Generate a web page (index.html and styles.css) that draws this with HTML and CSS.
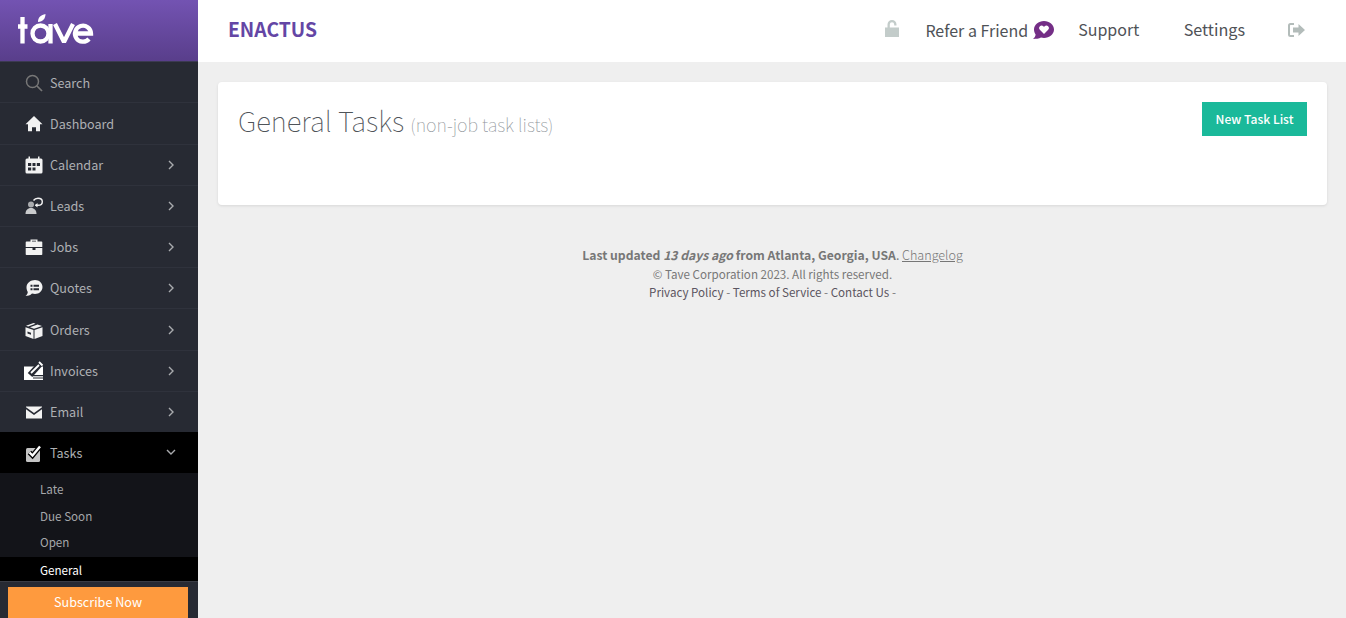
FILE: index.html
```html
<!DOCTYPE html>
<html lang="en">
<head>
<meta charset="utf-8">
<title>General Tasks</title>
<link rel="stylesheet" href="styles.css">
</head>
<body>
<div class="app">
  <aside class="sidebar">
    <div class="brand">
      <svg class="logo" viewBox="0 0 100 62" role="img" aria-label="táve">
        <g fill="none" stroke="#fff" stroke-width="4.300">
          <path d="M22.500 17V43.500M18 26.500H27.500"/>
          <circle cx="40.500" cy="33.500" r="8"/>
          <path d="M50.500 24V43.500"/>
          <path d="M55 24L64 42L73 24" stroke-linejoin="bevel"/>
          <path d="M75 33.500H91A8 8 0 1 0 89 39"/>
        </g>
        <path d="M38 22C38 17 41 15 45.500 14C45.500 18.500 43 21.500 38 22Z" fill="#fff"/>
      </svg>
    </div>
    <nav class="menu">
      <a class="item first-item"><svg class="ic dim" viewBox="0 0 18 18"><circle cx="7.500" cy="7.500" r="6" fill="none" stroke="currentColor" stroke-width="1.500"/><path d="M12 12l5 5" stroke="currentColor" stroke-width="1.700"/></svg><span class="label">Search</span></a>
      <a class="item"><svg class="ic" viewBox="0 0 18 18"><path d="M9 1L17.500 9.300h-2.500v7H11v-4H7v4H3V9.300H.5z" fill="currentColor"/></svg><span class="label">Dashboard</span></a>
      <a class="item"><svg class="ic" viewBox="0 0 18 18"><path d="M.5 4a1.500 1.500 0 0 1 1.500-1.500h1.500V.5H5v2h8v-2h1.500v2H16A1.500 1.500 0 0 1 17.500 4v12a1.500 1.500 0 0 1-1.500 1.500H2A1.500 1.500 0 0 1 .5 16z" fill="currentColor"/><path d="M3 7h3.200v3H3zM7.500 7h3v3h-3zM11.800 7H15v3h-3.200zM3 11.500h3.200v3H3zM7.500 11.500h3v3h-3z" fill="#272a33"/></svg><span class="label">Calendar</span><svg class="chev" viewBox="0 0 6 10"><path d="M1 1l4 4-4 4"/></svg></a>
      <a class="item"><svg class="ic" viewBox="0 0 18 18"><path d="M8.500 3.500C9.500 2 11 1.200 13 1.200c2.500 0 4.300 1.500 4.300 3.500S15.500 8.300 13 8.300h-2.500" fill="none" stroke="#f2f2f2" stroke-width="1.400"/><path d="M12.500 6l-2.700 2.300 2.700 2.200z" fill="#f2f2f2"/><circle cx="6" cy="7.500" r="3" fill="#a9abae"/><path d="M.5 17c0-3.500 2-6 5.500-6s5.500 2.500 5.500 6z" fill="#c9cacc"/></svg><span class="label">Leads</span><svg class="chev" viewBox="0 0 6 10"><path d="M1 1l4 4-4 4"/></svg></a>
      <a class="item"><svg class="ic" viewBox="0 0 18 18"><path d="M5.500 3.500V1.500h7v2H16.500a.8.8 0 0 1 .8.800V9H.7V4.300a.8.8 0 0 1 .8-.8zm1.500 0h4v-.8H7zM.7 10H7.500v2h3v-2h6.800v6.200a.8.8 0 0 1-.8.800h-15a.8.8 0 0 1-.8-.8z" fill="currentColor"/></svg><span class="label">Jobs</span><svg class="chev" viewBox="0 0 6 10"><path d="M1 1l4 4-4 4"/></svg></a>
      <a class="item"><svg class="ic" viewBox="0 0 18 18"><path d="M10 1C14 1 17.500 3.800 17.500 8S14 15 10 15c-1 0-2-.2-3-.5C5.300 16.300 2.800 17 .5 17c1.300-1 2.100-2.400 2.300-4C2 11.700 1.500 10 1.500 8.300 1.500 3.800 6 1 10 1z" fill="currentColor"/><path d="M5.500 5.800h2v2h-2zM8.500 5.800h5.500v2H8.500zM5.500 9.300h2v2h-2zM8.500 9.300h5.500v2H8.500z" fill="#272a33"/></svg><span class="label">Quotes</span><svg class="chev" viewBox="0 0 6 10"><path d="M1 1l4 4-4 4"/></svg></a>
      <a class="item"><svg class="ic" viewBox="0 0 18 18"><path d="M.5 6.300l8 2.800V18l-8-3zM17.500 6.300V15l-8 3V9.100zM1 4.700L8.500 2l2 .8L3.200 5.500zM5 6.200L12.500 3.500l4.500 1.500-8 2.800z" fill="currentColor"/><path d="M2.500 10.500l3.500 1.300v2l-3.500-1.300z" fill="#272a33"/></svg><span class="label">Orders</span><svg class="chev" viewBox="0 0 6 10"><path d="M1 1l4 4-4 4"/></svg></a>
      <a class="item"><svg class="ic wide" viewBox="0 0 20 20"><path d="M0 5.500H19V19H0z" fill="#fff"/><path d="M6 14L16 3" stroke="#272a33" stroke-width="6"/><path d="M7 12L15 4M15 1l3.500 3.500" stroke="#fff" stroke-width="1.800" fill="none"/><path d="M9 14.700H19M9 17H19" stroke="#272a33" stroke-width="1.200"/></svg><span class="label">Invoices</span><svg class="chev" viewBox="0 0 6 10"><path d="M1 1l4 4-4 4"/></svg></a>
      <a class="item"><svg class="ic" viewBox="0 0 18 18"><path d="M1 3.500h16v.8L9 10 1 4.300zM1 6.200l8 5.700 8-5.700V15.500H1z" fill="currentColor"/></svg><span class="label">Email</span><svg class="chev" viewBox="0 0 6 10"><path d="M1 1l4 4-4 4"/></svg></a>
      <a class="item open"><svg class="ic" viewBox="0 0 18 18"><rect x="1" y="4" width="14" height="14" rx="1.500" fill="#c4c4c4"/><path d="M4.500 8.500l3 3L15 2.500" fill="none" stroke="#000" stroke-width="5"/><path d="M4.500 8.500l3 3L15 2.500" fill="none" stroke="#fff" stroke-width="2.400"/></svg><span class="label">Tasks</span><svg class="chev-down" viewBox="0 0 10 6"><path d="M1 1l4 4 4-4"/></svg></a>
      <div class="sub">
        <a class="subitem">Late</a>
        <a class="subitem">Due Soon</a>
        <a class="subitem">Open</a>
        <a class="subitem active">General</a>
      </div>
    </nav>
    <div class="subscribe"><a class="subscribe-btn">Subscribe Now</a></div>
  </aside>
  <div class="main">
    <header class="topbar">
      <div class="org">ENACTUS</div>
      <nav class="topnav">
        <svg class="lock" viewBox="0 0 14 17"><path d="M0 7.500h14V17H0zM2.500 7.500V4.500a4.500 4.500 0 0 1 9 0v1H9.200v-1a2.200 2.200 0 0 0-4.400 0v3z" fill="currentColor"/></svg>
        <a class="toplink refer">Refer a Friend</a>
        <svg class="heart" viewBox="0 0 21 18"><path d="M11 0c5.500 0 10 3.700 10 8.500S16.500 17 11 17c-1 0-2-.1-3-.4C6 17.800 3 18 0 18c1.500-1.300 2.500-2.800 2.600-4.500C1.500 12 1 10.300 1 8.500 1 3.700 5.500 0 11 0z" fill="#742e86"/><path d="M11 13L6.800 8.800a2.500 2.500 0 0 1 3.600-3.500l.6.6.6-.6a2.500 2.500 0 0 1 3.600 3.500z" fill="#fff"/></svg>
        <a class="toplink support">Support</a>
        <a class="toplink settings">Settings</a>
        <svg class="logout" viewBox="0 0 17 14"><path d="M6 1H2.500A1.500 1.500 0 0 0 1 2.500v9A1.500 1.500 0 0 0 2.500 13H6" fill="none" stroke="currentColor" stroke-width="2"/><path d="M5 4.500h5.500V1l6.500 6-6.500 6V9.500H5z" fill="currentColor"/></svg>
      </nav>
    </header>
    <main class="content">
      <section class="card">
        <h1 class="title">General Tasks <small class="note">(non-job task lists)</small></h1>
        <a class="primary">New Task List</a>
      </section>
      <footer class="foot">
        <div class="foot-line first"><b>Last updated <i>13 days ago</i> from Atlanta, Georgia, USA</b>. <a class="changelog">Changelog</a></div>
        <div class="foot-line">© Tave Corporation 2023. All rights reserved.</div>
        <div class="foot-line links"><a>Privacy Policy</a> - <a>Terms of Service</a> - <a>Contact Us</a> -</div>
      </footer>
    </main>
  </div>
</div>
</body>
</html>
```
FILE: styles.css
```css
* { box-sizing: border-box; }
html, body { height: 100%; margin: 0; }
body {
  font-family: "Noto Sans CJK SC", "Noto Sans", sans-serif;
  font-size: 12.600px;
  background: #efefef;
  color: #555;
  overflow: hidden;
}
.app { display: flex; height: 618px; }
.sidebar {
  width: 198px;
  flex: none;
  display: flex;
  flex-direction: column;
  background: #272a33;
  height: 618px;
}
.brand {
  height: 62.300px;
  flex: none;
  overflow: hidden;
  background: linear-gradient(#7353b2, #593e8b);
  border-bottom: 1px solid #3c3a52;
}
.logo { display: block; width: 100px; height: 62px; }
.menu { flex: 1; min-height: 0; overflow: hidden; }
.item {
  display: flex;
  align-items: center;
  height: 41.200px;
  padding-left: 25px;
  padding-right: 24px;
  border-bottom: 1px solid #2f323c;
  color: #aeb0b3;
  line-height: 20px;
}
.first-item { padding-top: 2px; }
.ic { width: 18px; height: 18px; flex: none; color: #f2f2f2; margin-right: 7px; }
.ic.dim { color: #777; }
.ic.wide { width: 20px; height: 20px; margin-left: -1px; margin-right: 6px; margin-top: 1px; }
.label { flex: 1; }
.chev { width: 6px; height: 10px; flex: none; }
.chev path, .chev-down path { fill: none; stroke: #a9abae; stroke-width: 1.400; }
.chev-down { width: 10px; height: 6px; flex: none; margin-right: -2px; margin-top: -2px; }
.item.open { background: #000; border-bottom: 0; height: 41px; margin-top: -.7px; }
.sub { background: #131419; padding-top: 2.500px; font-size: 11.650px; }
.subitem {
  display: block;
  height: 26.800px;
  line-height: 26.800px;
  padding-left: 40px;
  color: #a5a7aa;
}
.subitem.active { margin-top: .6px; background: #000; color: #fff; height: 24px; }
.subscribe {
  flex: none;
  height: 37px;
  padding: 5px 10px 0 8px;
  border-top: 1px solid #3a3c44;
  background: #272a33;
}
.subscribe-btn {
  display: block;
  height: 31px;
  line-height: 29px;
  text-align: center;
  background: #fe9a3e;
  color: #fff;
  font-size: 12.600px;
}
.main { flex: 1; min-width: 0; display: flex; flex-direction: column; }
.topbar {
  height: 62px;
  flex: none;
  display: flex;
  align-items: center;
  justify-content: space-between;
  background: #fff;
  padding: 0 41px 0 30px;
}
.org { color: #6446a5; font-size: 19.300px; font-weight: 700; line-height: 28px; margin-top: -4px; }
.topnav { display: flex; align-items: center; color: #4f5257; }
.toplink { font-size: 16px; line-height: 24px; }
.lock { width: 14px; height: 17px; color: #c3ccca; margin: -5px 26px 0 0; }
.refer { margin-top: -2px; }
.heart { width: 21px; height: 18px; margin: -2px 0 0 5px; }
.support { margin-left: 24px; margin-top: -4px; }
.settings { margin-left: 44.500px; margin-top: -4px; font-size: 16.200px; }
.logout { width: 17px; height: 14px; color: #b3bcba; margin: -2px 0 0 43px; }
.content { flex: 1; padding: 20px 19px 0 20px; }
.card {
  display: flex;
  justify-content: space-between;
  align-items: flex-start;
  height: 123px;
  padding: 20px 20px 0;
  background: #fff;
  border-radius: 4px;
  box-shadow: 0 1px 3px rgba(0, 0, 0, .1);
}
.title { margin: 0; font-size: 27.600px; font-weight: 100; line-height: 36px; color: #4f5459; }
.note { font-size: 17.900px; font-weight: 100; color: #8f959a; }
.primary {
  display: block;
  width: 105px;
  height: 34px;
  line-height: 34px;
  text-align: center;
  background: #1ab99a;
  color: #fff;
  font-size: 12.100px;
  font-weight: 500;
}
.foot { margin-top: 40.500px; text-align: center; font-size: 11.600px; color: #777; }
.foot-line { line-height: 19px; height: 19px; }
.foot-line.first, .foot-line.links { line-height: 17px; }
.foot-line.first { font-size: 12.200px; }
.foot b { font-weight: 700; }
.changelog { text-decoration: underline; font-weight: 300; font-size: 12.600px; }
.links a { color: #5b5560; }
```
